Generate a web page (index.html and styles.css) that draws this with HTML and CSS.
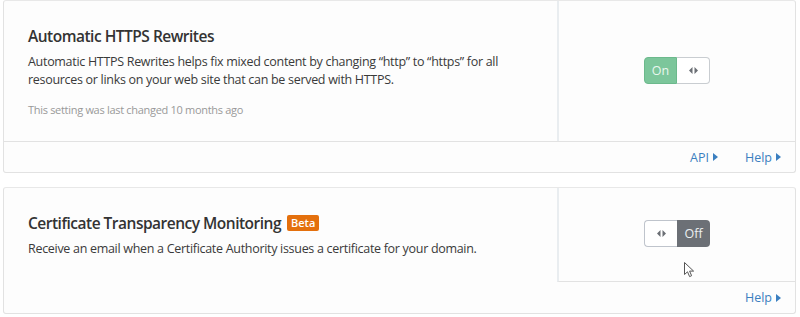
FILE: index.html
```html
<!DOCTYPE html>
<html>
<head>
<meta charset="utf-8">
<link rel="stylesheet" href="styles.css">
</head>
<body>
<div class="page">
  <section class="card">
    <div class="card-main divided">
      <div class="info">
        <h2 class="title">Automatic HTTPS Rewrites</h2>
        <p class="desc">Automatic HTTPS Rewrites helps fix mixed content by changing “http” to “https” for all resources or links on your web site that can be served with HTTPS.</p>
        <p class="meta">This setting was last changed 10 months ago</p>
      </div>
      <div class="control">
        <div class="toggle">
          <span class="seg seg-on">On</span>
          <span class="seg seg-knob"><svg width="9" height="7" viewBox="0 0 9 7"><path d="M3.5 0 L0 3.5 L3.5 7 Z M5.5 0 L9 3.5 L5.5 7 Z" fill="#6b6f75"/></svg></span>
        </div>
      </div>
    </div>
    <div class="card-foot">
      <a class="link">API <svg width="5" height="8" viewBox="0 0 5 8"><path d="M0 0 L5 4 L0 8 Z" fill="#3b7fc0"/></svg></a>
      <a class="link">Help <svg width="5" height="8" viewBox="0 0 5 8"><path d="M0 0 L5 4 L0 8 Z" fill="#3b7fc0"/></svg></a>
    </div>
  </section>

  <section class="card">
    <div class="card-main">
      <div class="info info-short">
        <h2 class="title">Certificate Transparency Monitoring <span class="badge">Beta</span></h2>
        <p class="desc">Receive an email when a Certificate Authority issues a certificate for your domain.</p>
      </div>
      <div class="control control-bottom">
        <div class="toggle">
          <span class="seg seg-knob seg-knob-left"><svg width="9" height="7" viewBox="0 0 9 7"><path d="M3.5 0 L0 3.5 L3.5 7 Z M5.5 0 L9 3.5 L5.5 7 Z" fill="#6b6f75"/></svg></span>
          <span class="seg seg-off">Off</span>
        </div>
        <svg class="cursor" width="12" height="16" viewBox="0 0 12 16"><path d="M0.5 0.5 L0.5 12.5 L3.5 9.8 L5.6 14.6 L7.6 13.7 L5.6 9.1 L9.6 9.1 Z" fill="#fff" stroke="#555" stroke-width="1" stroke-linejoin="round"/></svg>
      </div>
    </div>
    <div class="card-foot card-foot-tall">
      <a class="link">Help <svg width="5" height="8" viewBox="0 0 5 8"><path d="M0 0 L5 4 L0 8 Z" fill="#3b7fc0"/></svg></a>
    </div>
  </section>
</div>
</body>
</html>
```

FILE: styles.css
```css
* { box-sizing: border-box; }
html, body { margin: 0; padding: 0; background: #fff; }
body {
  font-family: "Open Sans", "Noto Sans", sans-serif;
  color: #333;
}
.page {
  padding: 0 4px 0 3px;
  display: flex;
  flex-direction: column;
  gap: 14px;
}
.card {
  border: 1px solid #e2e2e2;
  border-top-color: #e8e8e8;
  border-radius: 3px;
  background: #fdfdfd;
}
.card-main {
  display: flex;
}
.card-main.divided {
  border-bottom: 1px solid #e2e2e2;
}
.info {
  flex: 1;
  padding: 24px 24px 23px 24px;
}
.info-short {
  padding-bottom: 24px;
}
.title {
  margin: 0;
  font-size: 15.5px;
  letter-spacing: -0.5px;
  line-height: 22px;
  font-weight: 600;
  color: #333;
  display: flex;
  align-items: center;
}
.badge {
  display: inline-block;
  margin-left: 6px;
  background: #e4700d;
  color: #fff;
  font-size: 11px;
  font-weight: 600;
  letter-spacing: 0;
  line-height: 16px;
  padding: 0 4px;
  border-radius: 2px;
}
.desc {
  margin: 6px 0 0;
  font-size: 12.5px;
  letter-spacing: -0.3px;
  line-height: 18px;
  color: #3a3a3a;
}
.meta {
  margin: 13px 0 0;
  font-size: 11px;
  letter-spacing: -0.3px;
  line-height: 16px;
  color: #999;
}
.control {
  width: 238px;
  border-left: 2px solid #e9edf0;
  display: flex;
  align-items: center;
  justify-content: center;
  position: relative;
}
.control-bottom {
  border-bottom: 1px solid #e2e2e2;
}
.toggle {
  display: flex;
  height: 27px;
  margin-top: -2px;
}
.seg {
  width: 33px;
  display: flex;
  align-items: center;
  justify-content: center;
  font-size: 12.5px;
}
.seg-on {
  background: #7cc69b;
  color: #eaf7ef;
  border: 1px solid #6cb98c;
  border-radius: 4px 0 0 4px;
}
.seg-knob {
  background: #fff;
  border: 1px solid #c9cdd1;
  border-left: none;
  border-radius: 0 4px 4px 0;
}
.seg-knob-left {
  border: 1px solid #bfc4cc;
  border-right: none;
  border-radius: 4px 0 0 4px;
}
.seg-off {
  background: #6c7076;
  color: #eef0f2;
  border-radius: 0 4px 4px 0;
}
.cursor {
  position: absolute;
  left: 125px;
  top: 74px;
}
.card-foot {
  display: flex;
  justify-content: flex-end;
  align-items: center;
  gap: 27px;
  height: 30px;
  padding: 0 14px 0 0;
}
.card-foot-tall {
  height: 31px;
}
.link {
  color: #3b7fc0;
  font-size: 12.5px;
  display: flex;
  align-items: center;
  gap: 4px;
  cursor: pointer;
}
```
